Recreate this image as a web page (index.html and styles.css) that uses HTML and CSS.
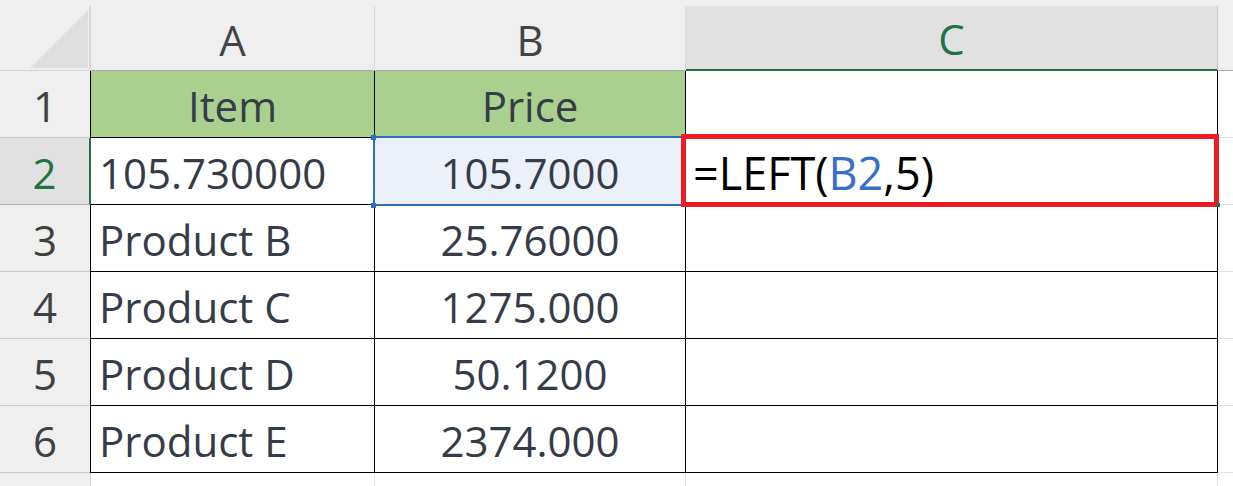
FILE: index.html
```html
<!DOCTYPE html>
<html>
<head>
<meta charset="utf-8">
<link rel="stylesheet" href="styles.css">
</head>
<body>
<div class="sheet">
  <div class="corner"><span class="tri"></span></div>
  <div class="colhead first">A</div>
  <div class="colhead">B</div>
  <div class="colhead active">C</div>
  <div class="colhead edge"></div>

  <div class="rowhead">1</div>
  <div class="cell a fill center">Item</div>
  <div class="cell b fill center">Price</div>
  <div class="cell c"></div>
  <div class="cell edge"></div>

  <div class="rowhead active">2</div>
  <div class="cell a a-active">105.730000</div>
  <div class="cell b center selected">105.7000<span class="sel-box"></span><span class="handle tl"></span><span class="handle bl"></span></div>
  <div class="cell c formula">=LEFT(<span class="ref">B2</span>,5)<span class="red-box"></span><span class="fill-handle"></span></div>
  <div class="cell edge"></div>

  <div class="rowhead">3</div>
  <div class="cell a">Product B</div>
  <div class="cell b center">25.76000</div>
  <div class="cell c"></div>
  <div class="cell edge"></div>

  <div class="rowhead">4</div>
  <div class="cell a">Product C</div>
  <div class="cell b center">1275.000</div>
  <div class="cell c"></div>
  <div class="cell edge"></div>

  <div class="rowhead">5</div>
  <div class="cell a">Product D</div>
  <div class="cell b center">50.1200</div>
  <div class="cell c"></div>
  <div class="cell edge"></div>

  <div class="rowhead">6</div>
  <div class="cell a">Product E</div>
  <div class="cell b center">2374.000</div>
  <div class="cell c"></div>
  <div class="cell edge"></div>

  <div class="rowhead last"></div>
  <div class="blank a"></div>
  <div class="blank"></div>
  <div class="blank"></div>
  <div class="blank edge"></div>
</div>
</body>
</html>
```

FILE: styles.css
```css
html, body {
  margin: 0;
  padding: 0;
  background: #efefef;
  overflow: hidden;
}

.sheet {
  margin-top: 6px;
  display: grid;
  grid-template-columns: 90px 285px 311px 532px 15px;
  grid-template-rows: 65px repeat(6, 67px) 13px;
  font-family: "Open Sans", "Noto Sans", sans-serif;
  font-size: 42px;
}

.sheet > div {
  box-sizing: border-box;
}

.corner {
  background: #efefef;
  border-right: 1px solid #d6d6d6;
  border-bottom: 1px solid #d6d6d6;
  display: flex;
  justify-content: flex-end;
  align-items: flex-start;
  padding: 4px 1px 0 0;
}

.tri {
  display: block;
  width: 58px;
  height: 58px;
  background: #dfdfdf;
  clip-path: polygon(100% 0, 100% 100%, 0 100%);
}

.colhead {
  background: #efefef;
  border-right: 1px solid #d9d9d9;
  border-bottom: 1px solid #ababab;
  color: #444444;
  display: flex;
  align-items: center;
  justify-content: center;
  padding-top: 2px;
}

.colhead.first {
  border-left: 1px solid #d9d9d9;
}

.colhead.active {
  background: #e1e1e1;
  color: #217346;
  border-bottom: 2px solid #217346;
  border-right: 1px solid #c8c8c8;
}

.colhead.edge {
  border-right: none;
}

.rowhead {
  background: #efefef;
  border-bottom: 1px solid #c9c9c9;
  color: #404040;
  display: flex;
  align-items: center;
  justify-content: center;
  padding-top: 2px;
}

.rowhead.active {
  background: #e1e1e1;
  color: #217346;
  border-right: 1px solid #217346;
  border-bottom-color: #b4b4b4;
}

.rowhead.last {
  border-bottom: none;
}

.cell {
  background: #ffffff;
  border-right: 1px solid #000000;
  border-bottom: 1px solid #000000;
  color: #353c48;
  display: flex;
  align-items: center;
  padding: 2px 6px 0 8px;
  white-space: nowrap;
  position: relative;
}

.cell.a {
  border-left: 1px solid #000000;
}

.cell.a-active {
  border-left-color: #217346;
}

.cell.center {
  justify-content: center;
  padding-left: 6px;
}

.cell.fill {
  background: #a9d08e;
}

.cell.edge {
  border-right: none;
  border-bottom: 1px solid #e1e1e1;
}

.cell.selected {
  background: #ebf0f9;
}

.sel-box {
  position: absolute;
  z-index: 1;
  left: -2px;
  top: -2px;
  right: -1px;
  bottom: -2px;
  border: 2px solid #2f6dc6;
}

.handle {
  position: absolute;
  z-index: 1;
  width: 5px;
  height: 5px;
  background: #2f6dc6;
  left: -4px;
}

.handle.tl {
  top: -3px;
}

.handle.bl {
  bottom: -4px;
}

.cell.formula {
  color: #000000;
  padding-left: 7px;
  font-size: 45px;
}

.ref {
  color: #3a6fc8;
}

.red-box {
  position: absolute;
  z-index: 2;
  left: -5px;
  top: -4px;
  right: -2px;
  bottom: -3px;
  border: 5px solid #ed1c24;
}

.fill-handle {
  position: absolute;
  z-index: 3;
  right: -3px;
  bottom: -3px;
  width: 4px;
  height: 4px;
  background: #217346;
}

.blank {
  background: #ffffff;
  border-right: 1px solid #e1e1e1;
}

.blank.a {
  border-left: 1px solid #d9d9d9;
}

.blank.edge {
  border-right: none;
}
```
